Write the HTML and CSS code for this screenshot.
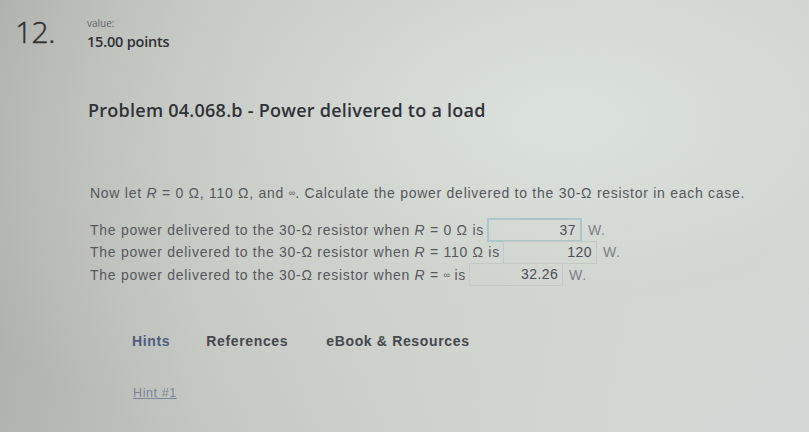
FILE: index.html
```html
<!DOCTYPE html>
<html>
<head>
<meta charset="utf-8">
<link rel="stylesheet" href="styles.css">
</head>
<body>
<div class="page">
  <div class="header">
    <div class="qnum">12.</div>
    <div class="meta">
      <div class="value-label">value:</div>
      <div class="points">15.00 points</div>
    </div>
  </div>
  <h1 class="title">Problem 04.068.b - Power delivered to a load</h1>
  <p class="prompt">Now let <i>R</i> = 0 Ω, 110 Ω, and <span class="inf">∞</span>. Calculate the power delivered to the 30-Ω resistor in each case.</p>
  <div class="rows">
    <div class="row">
      <span class="label">The power delivered to the 30-Ω resistor when <i>R</i> = 0 Ω is</span>
      <span class="box focus">37</span>
      <span class="unit">W.</span>
    </div>
    <div class="row">
      <span class="label">The power delivered to the 30-Ω resistor when <i>R</i> = 110 Ω is</span>
      <span class="box">120</span>
      <span class="unit">W.</span>
    </div>
    <div class="row">
      <span class="label">The power delivered to the 30-Ω resistor when <i>R</i> = <span class="inf">∞</span> is</span>
      <span class="box">32.26</span>
      <span class="unit">W.</span>
    </div>
  </div>
  <div class="tabs">
    <span class="tab active">Hints</span>
    <span class="tab">References</span>
    <span class="tab">eBook &amp; Resources</span>
  </div>
  <a class="hint" href="#">Hint #1</a>
</div>
</body>
</html>
```
FILE: styles.css
```css
html, body {
  margin: 0;
  height: 100%;
}
body {
  width: 809px;
  height: 432px;
  overflow: hidden;
  background:
    radial-gradient(ellipse 700px 380px at 560px 120px, rgba(220,226,222,0.95) 0%, rgba(210,214,208,0.6) 45%, rgba(160,163,158,0) 100%),
    linear-gradient(100deg, #aaada7 0%, #c3c6c0 30%, #d2d6d2 70%, #d3d8d8 100%);
  font-family: "Liberation Sans", Arial, sans-serif;
  color: #4a4d52;
}
.page {
  padding: 16px 0 0 15px;
}
.header {
  display: flex;
  align-items: flex-start;
}
.qnum {
  font-family: "Open Sans", sans-serif;
  font-weight: 300;
  font-size: 30px;
  line-height: 32px;
  color: #2c2e33;
  width: 72px;
  letter-spacing: -0.5px;
  -webkit-text-stroke: 0.4px #2c2e33;
}
.value-label {
  font-family: "Open Sans", sans-serif;
  font-size: 10px;
  line-height: 12px;
  margin-top: 1px;
  color: #5e6166;
}
.points {
  font-family: "Open Sans", sans-serif;
  font-size: 14.5px;
  line-height: 18px;
  margin-top: 4px;
  color: #2e3036;
  font-weight: 600;
  letter-spacing: -0.2px;
}
.title {
  margin: 47px 0 0 73px;
  font-family: "Open Sans", sans-serif;
  font-weight: 600;
  font-size: 18px;
  line-height: 24px;
  color: #2f3238;
  letter-spacing: 0.25px;
}
.prompt {
  margin: 62px 0 0 75px;
  font-size: 14px;
  line-height: 18px;
  letter-spacing: 0.73px;
  color: #55585d;
}
.inf {
  font-size: 9px;
  letter-spacing: 0;
  vertical-align: 2px;
}
.rows {
  margin: 17px 0 0 75px;
  display: flex;
  flex-direction: column;
}
.row {
  display: flex;
  align-items: center;
  height: 22.3px;
  font-size: 14px;
  letter-spacing: 0.72px;
  color: #55585d;
}
.label {
  white-space: nowrap;
}
.box {
  margin-left: 3px;
  width: 88px;
  height: 21px;
  line-height: 21px;
  border: 1px solid #c3c9c6;
  text-align: right;
  padding-right: 4px;
  color: #4a4e57;
  font-size: 14px;
  letter-spacing: 0.4px;
}
.box.focus {
  border: 2px solid #a9c6c8;
  height: 20px;
  line-height: 20px;
  width: 87px;
}
.unit {
  margin-left: 6px;
  color: #7d8186;
}
.tabs {
  margin: 47px 0 0 117px;
  display: flex;
  gap: 36px;
  font-size: 14px;
  letter-spacing: 0.65px;
  font-weight: bold;
  color: #44484e;
}
.tab.active {
  color: #4c5b82;
}
.tabs .tab:nth-child(3) {
  margin-left: 2px;
}
.hint {
  display: inline-block;
  margin: 37px 0 0 118px;
  font-size: 12.5px;
  letter-spacing: 0.6px;
  color: #7a8499;
  text-decoration: underline;
}
```
